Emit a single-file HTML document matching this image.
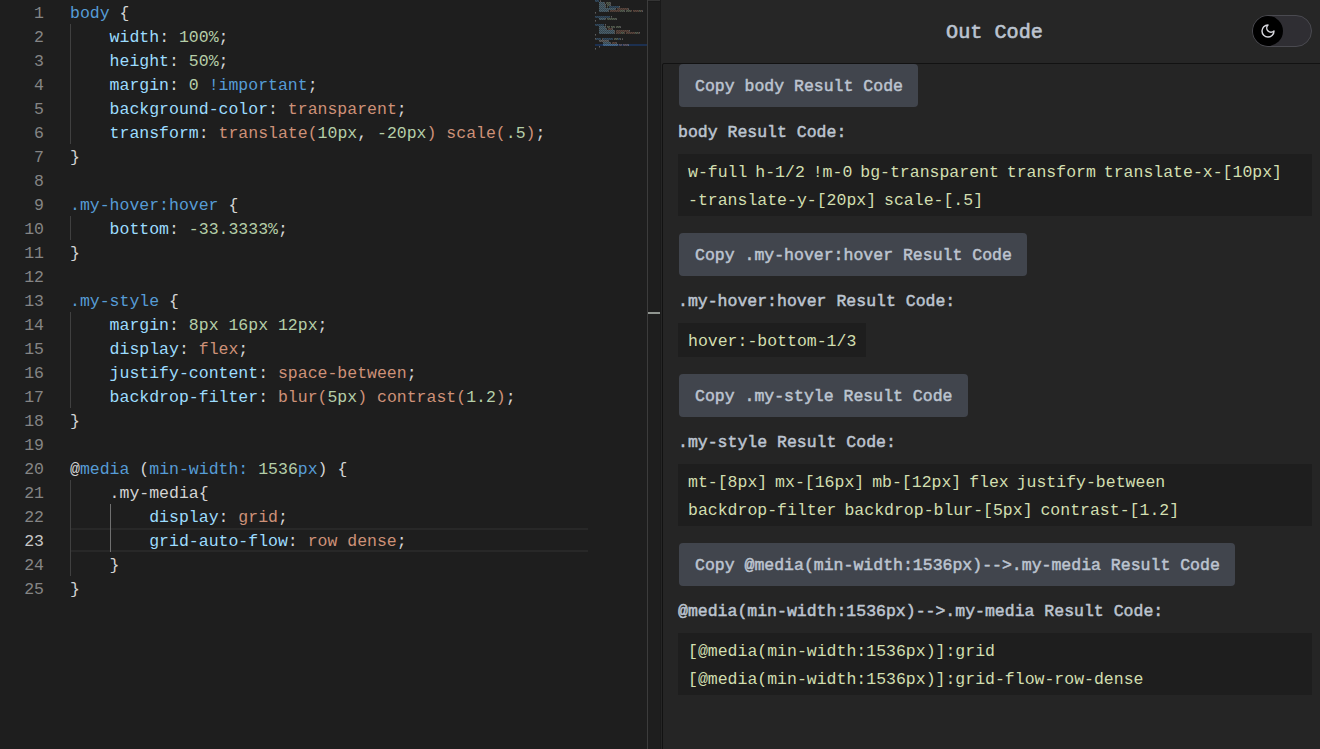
<!DOCTYPE html>
<html><head><meta charset="utf-8"><style>
html,body{margin:0;padding:0;width:1320px;height:749px;overflow:hidden;background:#1e1e1e;}
*{box-sizing:border-box;}
.ed{position:absolute;left:0;top:0;width:660px;height:749px;background:#1e1e1e;overflow:hidden;font-family:"Liberation Mono",monospace;font-size:16.5px;}
.ln{position:absolute;left:0;width:44px;text-align:right;color:#858585;line-height:24px;height:24px;padding-top:2px;}
.ln.act{color:#c6c6c6;}
.cl{position:absolute;left:70px;line-height:24px;height:24px;white-space:pre;padding-top:2px;}
.cur{position:absolute;left:70px;width:518px;height:24px;border-top:2px solid #282828;border-bottom:2px solid #282828;}
.ig{position:absolute;width:1px;background:#404040;}
.ig.ia{background:#707070;}
.mm{position:absolute;left:595px;top:0;}
.orb{position:absolute;left:647px;top:0;width:1px;height:749px;background:#3c3c3c;}
.curmark{position:absolute;left:648px;top:312px;width:13px;height:2px;background:#909590;}
.div{position:absolute;left:660px;top:0;width:1px;height:749px;background:#1a1a1a;}
.rp{position:absolute;left:661px;top:0;width:659px;height:749px;background:#262626;font-family:"Liberation Mono",monospace;}
.hdr{position:absolute;left:4px;top:1px;width:659px;height:63px;text-align:center;line-height:63px;font-weight:normal;-webkit-text-stroke:0.6px #bcc4d0;font-size:20.2px;color:#bcc4d0;}
.tog{position:absolute;left:591px;top:15px;width:60px;height:32px;border-radius:16px;border:1px solid #4a4a50;background:#2f2e33;}
.knob{position:absolute;left:0px;top:0px;width:30px;height:30px;border-radius:15px;background:#000;display:flex;align-items:center;justify-content:center;}
.box{position:absolute;left:1px;top:63px;width:700px;height:800px;border:1px solid #121212;border-radius:2px;background:#252525;}
.btn{position:absolute;left:18px;height:43px;line-height:45px;padding:0 16px;background:#41454d;color:#bcc4d0;font-weight:normal;-webkit-text-stroke:0.5px #bcc4d0;font-size:16.5px;border-radius:4px;white-space:pre;}
.lbl{position:absolute;left:17px;height:28px;line-height:28px;font-weight:normal;-webkit-text-stroke:0.5px #bcc4d0;font-size:16.5px;color:#bcc4d0;white-space:pre;}
.blk{position:absolute;left:17px;background:#1e1e1e;padding:3px 10px;font-size:16.5px;color:#d2dfb0;word-spacing:-2px;}
.bl{height:28px;line-height:28px;white-space:pre;padding-top:2px;}
</style></head><body>
<div class="ed">
<div class="ln" style="top:0px">1</div>
<div class="ln" style="top:24px">2</div>
<div class="ln" style="top:48px">3</div>
<div class="ln" style="top:72px">4</div>
<div class="ln" style="top:96px">5</div>
<div class="ln" style="top:120px">6</div>
<div class="ln" style="top:144px">7</div>
<div class="ln" style="top:168px">8</div>
<div class="ln" style="top:192px">9</div>
<div class="ln" style="top:216px">10</div>
<div class="ln" style="top:240px">11</div>
<div class="ln" style="top:264px">12</div>
<div class="ln" style="top:288px">13</div>
<div class="ln" style="top:312px">14</div>
<div class="ln" style="top:336px">15</div>
<div class="ln" style="top:360px">16</div>
<div class="ln" style="top:384px">17</div>
<div class="ln" style="top:408px">18</div>
<div class="ln" style="top:432px">19</div>
<div class="ln" style="top:456px">20</div>
<div class="ln" style="top:480px">21</div>
<div class="ln" style="top:504px">22</div>
<div class="ln act" style="top:528px">23</div>
<div class="ln" style="top:552px">24</div>
<div class="ln" style="top:576px">25</div>
<div class="cur" style="top:528px"></div>
<div class="ig" style="left:70px;top:24px;height:120px"></div>
<div class="ig" style="left:70px;top:216px;height:24px"></div>
<div class="ig" style="left:70px;top:312px;height:96px"></div>
<div class="ig" style="left:70px;top:480px;height:96px"></div>
<div class="ig ia" style="left:110px;top:504px;height:48px"></div>
<div class="cl" style="top:0px"><span style="color:#569cd6">body</span> <span style="color:#d4d4d4">{</span></div>
<div class="cl" style="top:24px">    <span style="color:#9cdcfe">width</span><span style="color:#d4d4d4">: </span><span style="color:#b5cea8">100%</span><span style="color:#d4d4d4">;</span></div>
<div class="cl" style="top:48px">    <span style="color:#9cdcfe">height</span><span style="color:#d4d4d4">: </span><span style="color:#b5cea8">50%</span><span style="color:#d4d4d4">;</span></div>
<div class="cl" style="top:72px">    <span style="color:#9cdcfe">margin</span><span style="color:#d4d4d4">: </span><span style="color:#b5cea8">0</span> <span style="color:#569cd6">!important</span><span style="color:#d4d4d4">;</span></div>
<div class="cl" style="top:96px">    <span style="color:#9cdcfe">background-color</span><span style="color:#d4d4d4">: </span><span style="color:#ce9178">transparent</span><span style="color:#d4d4d4">;</span></div>
<div class="cl" style="top:120px">    <span style="color:#9cdcfe">transform</span><span style="color:#d4d4d4">: </span><span style="color:#ce9178">translate(</span><span style="color:#b5cea8">10px</span><span style="color:#d4d4d4">, </span><span style="color:#b5cea8">-20px</span><span style="color:#ce9178">)</span> <span style="color:#ce9178">scale(</span><span style="color:#b5cea8">.5</span><span style="color:#ce9178">)</span><span style="color:#d4d4d4">;</span></div>
<div class="cl" style="top:144px"><span style="color:#d4d4d4">}</span></div>
<div class="cl" style="top:168px"></div>
<div class="cl" style="top:192px"><span style="color:#569cd6">.my-hover:hover</span> <span style="color:#d4d4d4">{</span></div>
<div class="cl" style="top:216px">    <span style="color:#9cdcfe">bottom</span><span style="color:#d4d4d4">: </span><span style="color:#b5cea8">-33.3333%</span><span style="color:#d4d4d4">;</span></div>
<div class="cl" style="top:240px"><span style="color:#d4d4d4">}</span></div>
<div class="cl" style="top:264px"></div>
<div class="cl" style="top:288px"><span style="color:#569cd6">.my-style</span> <span style="color:#d4d4d4">{</span></div>
<div class="cl" style="top:312px">    <span style="color:#9cdcfe">margin</span><span style="color:#d4d4d4">: </span><span style="color:#b5cea8">8px 16px 12px</span><span style="color:#d4d4d4">;</span></div>
<div class="cl" style="top:336px">    <span style="color:#9cdcfe">display</span><span style="color:#d4d4d4">: </span><span style="color:#ce9178">flex</span><span style="color:#d4d4d4">;</span></div>
<div class="cl" style="top:360px">    <span style="color:#9cdcfe">justify-content</span><span style="color:#d4d4d4">: </span><span style="color:#ce9178">space-between</span><span style="color:#d4d4d4">;</span></div>
<div class="cl" style="top:384px">    <span style="color:#9cdcfe">backdrop-filter</span><span style="color:#d4d4d4">: </span><span style="color:#ce9178">blur(</span><span style="color:#b5cea8">5px</span><span style="color:#ce9178">)</span> <span style="color:#ce9178">contrast(</span><span style="color:#b5cea8">1.2</span><span style="color:#ce9178">)</span><span style="color:#d4d4d4">;</span></div>
<div class="cl" style="top:408px"><span style="color:#d4d4d4">}</span></div>
<div class="cl" style="top:432px"></div>
<div class="cl" style="top:456px"><span style="color:#d4d4d4">@</span><span style="color:#569cd6">media</span> <span style="color:#d4d4d4">(</span><span style="color:#569cd6">min-width:</span> <span style="color:#b5cea8">1536</span><span style="color:#569cd6">px</span><span style="color:#d4d4d4">)</span> <span style="color:#d4d4d4">{</span></div>
<div class="cl" style="top:480px">    <span style="color:#d4d4d4">.my-media{</span></div>
<div class="cl" style="top:504px">        <span style="color:#9cdcfe">display</span><span style="color:#d4d4d4">: </span><span style="color:#ce9178">grid</span><span style="color:#d4d4d4">;</span></div>
<div class="cl" style="top:528px">        <span style="color:#9cdcfe">grid-auto-flow</span><span style="color:#d4d4d4">: </span><span style="color:#ce9178">row dense</span><span style="color:#d4d4d4">;</span></div>
<div class="cl" style="top:552px">    <span style="color:#d4d4d4">}</span></div>
<div class="cl" style="top:576px"><span style="color:#d4d4d4">}</span></div>
<svg class="mm" width="60" height="60" viewBox="0 0 60 60"><rect x="0" y="44" width="52" height="2" fill="#1c3050"/><g opacity="0.8"><rect x="0" y="0" width="1" height="1" fill="#569cd6" opacity="0.45"/><rect x="0" y="1" width="1" height="1" fill="#569cd6" opacity="0.25"/><rect x="1" y="0" width="1" height="1" fill="#569cd6" opacity="0.3"/><rect x="1" y="1" width="1" height="1" fill="#569cd6" opacity="0.4"/><rect x="2" y="0" width="1" height="1" fill="#569cd6" opacity="0.45"/><rect x="2" y="1" width="1" height="1" fill="#569cd6" opacity="0.25"/><rect x="3" y="0" width="1" height="1" fill="#569cd6" opacity="0.3"/><rect x="3" y="1" width="1" height="1" fill="#569cd6" opacity="0.4"/><rect x="5" y="0" width="1" height="1" fill="#d4d4d4" opacity="0.3"/><rect x="5" y="1" width="1" height="1" fill="#d4d4d4" opacity="0.4"/><rect x="4" y="2" width="1" height="1" fill="#9cdcfe" opacity="0.45"/><rect x="4" y="3" width="1" height="1" fill="#9cdcfe" opacity="0.25"/><rect x="5" y="2" width="1" height="1" fill="#9cdcfe" opacity="0.3"/><rect x="5" y="3" width="1" height="1" fill="#9cdcfe" opacity="0.4"/><rect x="6" y="2" width="1" height="1" fill="#9cdcfe" opacity="0.45"/><rect x="6" y="3" width="1" height="1" fill="#9cdcfe" opacity="0.25"/><rect x="7" y="2" width="1" height="1" fill="#9cdcfe" opacity="0.3"/><rect x="7" y="3" width="1" height="1" fill="#9cdcfe" opacity="0.4"/><rect x="8" y="2" width="1" height="1" fill="#9cdcfe" opacity="0.45"/><rect x="8" y="3" width="1" height="1" fill="#9cdcfe" opacity="0.25"/><rect x="9" y="2" width="1" height="1" fill="#d4d4d4" opacity="0.3"/><rect x="9" y="3" width="1" height="1" fill="#d4d4d4" opacity="0.4"/><rect x="11" y="2" width="1" height="1" fill="#b5cea8" opacity="0.3"/><rect x="11" y="3" width="1" height="1" fill="#b5cea8" opacity="0.4"/><rect x="12" y="2" width="1" height="1" fill="#b5cea8" opacity="0.45"/><rect x="12" y="3" width="1" height="1" fill="#b5cea8" opacity="0.25"/><rect x="13" y="2" width="1" height="1" fill="#b5cea8" opacity="0.3"/><rect x="13" y="3" width="1" height="1" fill="#b5cea8" opacity="0.4"/><rect x="14" y="2" width="1" height="1" fill="#b5cea8" opacity="0.45"/><rect x="14" y="3" width="1" height="1" fill="#b5cea8" opacity="0.25"/><rect x="15" y="2" width="1" height="1" fill="#d4d4d4" opacity="0.3"/><rect x="15" y="3" width="1" height="1" fill="#d4d4d4" opacity="0.4"/><rect x="4" y="4" width="1" height="1" fill="#9cdcfe" opacity="0.45"/><rect x="4" y="5" width="1" height="1" fill="#9cdcfe" opacity="0.25"/><rect x="5" y="4" width="1" height="1" fill="#9cdcfe" opacity="0.3"/><rect x="5" y="5" width="1" height="1" fill="#9cdcfe" opacity="0.4"/><rect x="6" y="4" width="1" height="1" fill="#9cdcfe" opacity="0.45"/><rect x="6" y="5" width="1" height="1" fill="#9cdcfe" opacity="0.25"/><rect x="7" y="4" width="1" height="1" fill="#9cdcfe" opacity="0.3"/><rect x="7" y="5" width="1" height="1" fill="#9cdcfe" opacity="0.4"/><rect x="8" y="4" width="1" height="1" fill="#9cdcfe" opacity="0.45"/><rect x="8" y="5" width="1" height="1" fill="#9cdcfe" opacity="0.25"/><rect x="9" y="4" width="1" height="1" fill="#9cdcfe" opacity="0.3"/><rect x="9" y="5" width="1" height="1" fill="#9cdcfe" opacity="0.4"/><rect x="10" y="4" width="1" height="1" fill="#d4d4d4" opacity="0.45"/><rect x="10" y="5" width="1" height="1" fill="#d4d4d4" opacity="0.25"/><rect x="12" y="4" width="1" height="1" fill="#b5cea8" opacity="0.45"/><rect x="12" y="5" width="1" height="1" fill="#b5cea8" opacity="0.25"/><rect x="13" y="4" width="1" height="1" fill="#b5cea8" opacity="0.3"/><rect x="13" y="5" width="1" height="1" fill="#b5cea8" opacity="0.4"/><rect x="14" y="4" width="1" height="1" fill="#b5cea8" opacity="0.45"/><rect x="14" y="5" width="1" height="1" fill="#b5cea8" opacity="0.25"/><rect x="15" y="4" width="1" height="1" fill="#d4d4d4" opacity="0.3"/><rect x="15" y="5" width="1" height="1" fill="#d4d4d4" opacity="0.4"/><rect x="4" y="6" width="1" height="1" fill="#9cdcfe" opacity="0.45"/><rect x="4" y="7" width="1" height="1" fill="#9cdcfe" opacity="0.25"/><rect x="5" y="6" width="1" height="1" fill="#9cdcfe" opacity="0.3"/><rect x="5" y="7" width="1" height="1" fill="#9cdcfe" opacity="0.4"/><rect x="6" y="6" width="1" height="1" fill="#9cdcfe" opacity="0.45"/><rect x="6" y="7" width="1" height="1" fill="#9cdcfe" opacity="0.25"/><rect x="7" y="6" width="1" height="1" fill="#9cdcfe" opacity="0.3"/><rect x="7" y="7" width="1" height="1" fill="#9cdcfe" opacity="0.4"/><rect x="8" y="6" width="1" height="1" fill="#9cdcfe" opacity="0.45"/><rect x="8" y="7" width="1" height="1" fill="#9cdcfe" opacity="0.25"/><rect x="9" y="6" width="1" height="1" fill="#9cdcfe" opacity="0.3"/><rect x="9" y="7" width="1" height="1" fill="#9cdcfe" opacity="0.4"/><rect x="10" y="6" width="1" height="1" fill="#d4d4d4" opacity="0.45"/><rect x="10" y="7" width="1" height="1" fill="#d4d4d4" opacity="0.25"/><rect x="12" y="6" width="1" height="1" fill="#b5cea8" opacity="0.45"/><rect x="12" y="7" width="1" height="1" fill="#b5cea8" opacity="0.25"/><rect x="14" y="6" width="1" height="1" fill="#569cd6" opacity="0.45"/><rect x="14" y="7" width="1" height="1" fill="#569cd6" opacity="0.25"/><rect x="15" y="6" width="1" height="1" fill="#569cd6" opacity="0.3"/><rect x="15" y="7" width="1" height="1" fill="#569cd6" opacity="0.4"/><rect x="16" y="6" width="1" height="1" fill="#569cd6" opacity="0.45"/><rect x="16" y="7" width="1" height="1" fill="#569cd6" opacity="0.25"/><rect x="17" y="6" width="1" height="1" fill="#569cd6" opacity="0.3"/><rect x="17" y="7" width="1" height="1" fill="#569cd6" opacity="0.4"/><rect x="18" y="6" width="1" height="1" fill="#569cd6" opacity="0.45"/><rect x="18" y="7" width="1" height="1" fill="#569cd6" opacity="0.25"/><rect x="19" y="6" width="1" height="1" fill="#569cd6" opacity="0.3"/><rect x="19" y="7" width="1" height="1" fill="#569cd6" opacity="0.4"/><rect x="20" y="6" width="1" height="1" fill="#569cd6" opacity="0.45"/><rect x="20" y="7" width="1" height="1" fill="#569cd6" opacity="0.25"/><rect x="21" y="6" width="1" height="1" fill="#569cd6" opacity="0.3"/><rect x="21" y="7" width="1" height="1" fill="#569cd6" opacity="0.4"/><rect x="22" y="6" width="1" height="1" fill="#569cd6" opacity="0.45"/><rect x="22" y="7" width="1" height="1" fill="#569cd6" opacity="0.25"/><rect x="23" y="6" width="1" height="1" fill="#569cd6" opacity="0.3"/><rect x="23" y="7" width="1" height="1" fill="#569cd6" opacity="0.4"/><rect x="24" y="6" width="1" height="1" fill="#d4d4d4" opacity="0.45"/><rect x="24" y="7" width="1" height="1" fill="#d4d4d4" opacity="0.25"/><rect x="4" y="8" width="1" height="1" fill="#9cdcfe" opacity="0.45"/><rect x="4" y="9" width="1" height="1" fill="#9cdcfe" opacity="0.25"/><rect x="5" y="8" width="1" height="1" fill="#9cdcfe" opacity="0.3"/><rect x="5" y="9" width="1" height="1" fill="#9cdcfe" opacity="0.4"/><rect x="6" y="8" width="1" height="1" fill="#9cdcfe" opacity="0.45"/><rect x="6" y="9" width="1" height="1" fill="#9cdcfe" opacity="0.25"/><rect x="7" y="8" width="1" height="1" fill="#9cdcfe" opacity="0.3"/><rect x="7" y="9" width="1" height="1" fill="#9cdcfe" opacity="0.4"/><rect x="8" y="8" width="1" height="1" fill="#9cdcfe" opacity="0.45"/><rect x="8" y="9" width="1" height="1" fill="#9cdcfe" opacity="0.25"/><rect x="9" y="8" width="1" height="1" fill="#9cdcfe" opacity="0.3"/><rect x="9" y="9" width="1" height="1" fill="#9cdcfe" opacity="0.4"/><rect x="10" y="8" width="1" height="1" fill="#9cdcfe" opacity="0.45"/><rect x="10" y="9" width="1" height="1" fill="#9cdcfe" opacity="0.25"/><rect x="11" y="8" width="1" height="1" fill="#9cdcfe" opacity="0.3"/><rect x="11" y="9" width="1" height="1" fill="#9cdcfe" opacity="0.4"/><rect x="12" y="8" width="1" height="1" fill="#9cdcfe" opacity="0.45"/><rect x="12" y="9" width="1" height="1" fill="#9cdcfe" opacity="0.25"/><rect x="13" y="8" width="1" height="1" fill="#9cdcfe" opacity="0.3"/><rect x="13" y="9" width="1" height="1" fill="#9cdcfe" opacity="0.4"/><rect x="14" y="8" width="1" height="1" fill="#9cdcfe" opacity="0.45"/><rect x="14" y="9" width="1" height="1" fill="#9cdcfe" opacity="0.25"/><rect x="15" y="8" width="1" height="1" fill="#9cdcfe" opacity="0.3"/><rect x="15" y="9" width="1" height="1" fill="#9cdcfe" opacity="0.4"/><rect x="16" y="8" width="1" height="1" fill="#9cdcfe" opacity="0.45"/><rect x="16" y="9" width="1" height="1" fill="#9cdcfe" opacity="0.25"/><rect x="17" y="8" width="1" height="1" fill="#9cdcfe" opacity="0.3"/><rect x="17" y="9" width="1" height="1" fill="#9cdcfe" opacity="0.4"/><rect x="18" y="8" width="1" height="1" fill="#9cdcfe" opacity="0.45"/><rect x="18" y="9" width="1" height="1" fill="#9cdcfe" opacity="0.25"/><rect x="19" y="8" width="1" height="1" fill="#9cdcfe" opacity="0.3"/><rect x="19" y="9" width="1" height="1" fill="#9cdcfe" opacity="0.4"/><rect x="20" y="8" width="1" height="1" fill="#d4d4d4" opacity="0.45"/><rect x="20" y="9" width="1" height="1" fill="#d4d4d4" opacity="0.25"/><rect x="22" y="8" width="1" height="1" fill="#ce9178" opacity="0.45"/><rect x="22" y="9" width="1" height="1" fill="#ce9178" opacity="0.25"/><rect x="23" y="8" width="1" height="1" fill="#ce9178" opacity="0.3"/><rect x="23" y="9" width="1" height="1" fill="#ce9178" opacity="0.4"/><rect x="24" y="8" width="1" height="1" fill="#ce9178" opacity="0.45"/><rect x="24" y="9" width="1" height="1" fill="#ce9178" opacity="0.25"/><rect x="25" y="8" width="1" height="1" fill="#ce9178" opacity="0.3"/><rect x="25" y="9" width="1" height="1" fill="#ce9178" opacity="0.4"/><rect x="26" y="8" width="1" height="1" fill="#ce9178" opacity="0.45"/><rect x="26" y="9" width="1" height="1" fill="#ce9178" opacity="0.25"/><rect x="27" y="8" width="1" height="1" fill="#ce9178" opacity="0.3"/><rect x="27" y="9" width="1" height="1" fill="#ce9178" opacity="0.4"/><rect x="28" y="8" width="1" height="1" fill="#ce9178" opacity="0.45"/><rect x="28" y="9" width="1" height="1" fill="#ce9178" opacity="0.25"/><rect x="29" y="8" width="1" height="1" fill="#ce9178" opacity="0.3"/><rect x="29" y="9" width="1" height="1" fill="#ce9178" opacity="0.4"/><rect x="30" y="8" width="1" height="1" fill="#ce9178" opacity="0.45"/><rect x="30" y="9" width="1" height="1" fill="#ce9178" opacity="0.25"/><rect x="31" y="8" width="1" height="1" fill="#ce9178" opacity="0.3"/><rect x="31" y="9" width="1" height="1" fill="#ce9178" opacity="0.4"/><rect x="32" y="8" width="1" height="1" fill="#ce9178" opacity="0.45"/><rect x="32" y="9" width="1" height="1" fill="#ce9178" opacity="0.25"/><rect x="33" y="8" width="1" height="1" fill="#d4d4d4" opacity="0.3"/><rect x="33" y="9" width="1" height="1" fill="#d4d4d4" opacity="0.4"/><rect x="4" y="10" width="1" height="1" fill="#9cdcfe" opacity="0.45"/><rect x="4" y="11" width="1" height="1" fill="#9cdcfe" opacity="0.25"/><rect x="5" y="10" width="1" height="1" fill="#9cdcfe" opacity="0.3"/><rect x="5" y="11" width="1" height="1" fill="#9cdcfe" opacity="0.4"/><rect x="6" y="10" width="1" height="1" fill="#9cdcfe" opacity="0.45"/><rect x="6" y="11" width="1" height="1" fill="#9cdcfe" opacity="0.25"/><rect x="7" y="10" width="1" height="1" fill="#9cdcfe" opacity="0.3"/><rect x="7" y="11" width="1" height="1" fill="#9cdcfe" opacity="0.4"/><rect x="8" y="10" width="1" height="1" fill="#9cdcfe" opacity="0.45"/><rect x="8" y="11" width="1" height="1" fill="#9cdcfe" opacity="0.25"/><rect x="9" y="10" width="1" height="1" fill="#9cdcfe" opacity="0.3"/><rect x="9" y="11" width="1" height="1" fill="#9cdcfe" opacity="0.4"/><rect x="10" y="10" width="1" height="1" fill="#9cdcfe" opacity="0.45"/><rect x="10" y="11" width="1" height="1" fill="#9cdcfe" opacity="0.25"/><rect x="11" y="10" width="1" height="1" fill="#9cdcfe" opacity="0.3"/><rect x="11" y="11" width="1" height="1" fill="#9cdcfe" opacity="0.4"/><rect x="12" y="10" width="1" height="1" fill="#9cdcfe" opacity="0.45"/><rect x="12" y="11" width="1" height="1" fill="#9cdcfe" opacity="0.25"/><rect x="13" y="10" width="1" height="1" fill="#d4d4d4" opacity="0.3"/><rect x="13" y="11" width="1" height="1" fill="#d4d4d4" opacity="0.4"/><rect x="15" y="10" width="1" height="1" fill="#ce9178" opacity="0.3"/><rect x="15" y="11" width="1" height="1" fill="#ce9178" opacity="0.4"/><rect x="16" y="10" width="1" height="1" fill="#ce9178" opacity="0.45"/><rect x="16" y="11" width="1" height="1" fill="#ce9178" opacity="0.25"/><rect x="17" y="10" width="1" height="1" fill="#ce9178" opacity="0.3"/><rect x="17" y="11" width="1" height="1" fill="#ce9178" opacity="0.4"/><rect x="18" y="10" width="1" height="1" fill="#ce9178" opacity="0.45"/><rect x="18" y="11" width="1" height="1" fill="#ce9178" opacity="0.25"/><rect x="19" y="10" width="1" height="1" fill="#ce9178" opacity="0.3"/><rect x="19" y="11" width="1" height="1" fill="#ce9178" opacity="0.4"/><rect x="20" y="10" width="1" height="1" fill="#ce9178" opacity="0.45"/><rect x="20" y="11" width="1" height="1" fill="#ce9178" opacity="0.25"/><rect x="21" y="10" width="1" height="1" fill="#ce9178" opacity="0.3"/><rect x="21" y="11" width="1" height="1" fill="#ce9178" opacity="0.4"/><rect x="22" y="10" width="1" height="1" fill="#ce9178" opacity="0.45"/><rect x="22" y="11" width="1" height="1" fill="#ce9178" opacity="0.25"/><rect x="23" y="10" width="1" height="1" fill="#ce9178" opacity="0.3"/><rect x="23" y="11" width="1" height="1" fill="#ce9178" opacity="0.4"/><rect x="24" y="10" width="1" height="1" fill="#ce9178" opacity="0.45"/><rect x="24" y="11" width="1" height="1" fill="#ce9178" opacity="0.25"/><rect x="25" y="10" width="1" height="1" fill="#b5cea8" opacity="0.3"/><rect x="25" y="11" width="1" height="1" fill="#b5cea8" opacity="0.4"/><rect x="26" y="10" width="1" height="1" fill="#b5cea8" opacity="0.45"/><rect x="26" y="11" width="1" height="1" fill="#b5cea8" opacity="0.25"/><rect x="27" y="10" width="1" height="1" fill="#b5cea8" opacity="0.3"/><rect x="27" y="11" width="1" height="1" fill="#b5cea8" opacity="0.4"/><rect x="28" y="10" width="1" height="1" fill="#b5cea8" opacity="0.45"/><rect x="28" y="11" width="1" height="1" fill="#b5cea8" opacity="0.25"/><rect x="29" y="10" width="1" height="1" fill="#d4d4d4" opacity="0.3"/><rect x="29" y="11" width="1" height="1" fill="#d4d4d4" opacity="0.4"/><rect x="31" y="10" width="1" height="1" fill="#b5cea8" opacity="0.3"/><rect x="31" y="11" width="1" height="1" fill="#b5cea8" opacity="0.4"/><rect x="32" y="10" width="1" height="1" fill="#b5cea8" opacity="0.45"/><rect x="32" y="11" width="1" height="1" fill="#b5cea8" opacity="0.25"/><rect x="33" y="10" width="1" height="1" fill="#b5cea8" opacity="0.3"/><rect x="33" y="11" width="1" height="1" fill="#b5cea8" opacity="0.4"/><rect x="34" y="10" width="1" height="1" fill="#b5cea8" opacity="0.45"/><rect x="34" y="11" width="1" height="1" fill="#b5cea8" opacity="0.25"/><rect x="35" y="10" width="1" height="1" fill="#b5cea8" opacity="0.3"/><rect x="35" y="11" width="1" height="1" fill="#b5cea8" opacity="0.4"/><rect x="36" y="10" width="1" height="1" fill="#ce9178" opacity="0.45"/><rect x="36" y="11" width="1" height="1" fill="#ce9178" opacity="0.25"/><rect x="38" y="10" width="1" height="1" fill="#ce9178" opacity="0.45"/><rect x="38" y="11" width="1" height="1" fill="#ce9178" opacity="0.25"/><rect x="39" y="10" width="1" height="1" fill="#ce9178" opacity="0.3"/><rect x="39" y="11" width="1" height="1" fill="#ce9178" opacity="0.4"/><rect x="40" y="10" width="1" height="1" fill="#ce9178" opacity="0.45"/><rect x="40" y="11" width="1" height="1" fill="#ce9178" opacity="0.25"/><rect x="41" y="10" width="1" height="1" fill="#ce9178" opacity="0.3"/><rect x="41" y="11" width="1" height="1" fill="#ce9178" opacity="0.4"/><rect x="42" y="10" width="1" height="1" fill="#ce9178" opacity="0.45"/><rect x="42" y="11" width="1" height="1" fill="#ce9178" opacity="0.25"/><rect x="43" y="10" width="1" height="1" fill="#ce9178" opacity="0.3"/><rect x="43" y="11" width="1" height="1" fill="#ce9178" opacity="0.4"/><rect x="44" y="10" width="1" height="1" fill="#b5cea8" opacity="0.45"/><rect x="44" y="11" width="1" height="1" fill="#b5cea8" opacity="0.25"/><rect x="45" y="10" width="1" height="1" fill="#b5cea8" opacity="0.3"/><rect x="45" y="11" width="1" height="1" fill="#b5cea8" opacity="0.4"/><rect x="46" y="10" width="1" height="1" fill="#ce9178" opacity="0.45"/><rect x="46" y="11" width="1" height="1" fill="#ce9178" opacity="0.25"/><rect x="47" y="10" width="1" height="1" fill="#d4d4d4" opacity="0.3"/><rect x="47" y="11" width="1" height="1" fill="#d4d4d4" opacity="0.4"/><rect x="0" y="12" width="1" height="1" fill="#d4d4d4" opacity="0.45"/><rect x="0" y="13" width="1" height="1" fill="#d4d4d4" opacity="0.25"/><rect x="0" y="16" width="1" height="1" fill="#569cd6" opacity="0.45"/><rect x="0" y="17" width="1" height="1" fill="#569cd6" opacity="0.25"/><rect x="1" y="16" width="1" height="1" fill="#569cd6" opacity="0.3"/><rect x="1" y="17" width="1" height="1" fill="#569cd6" opacity="0.4"/><rect x="2" y="16" width="1" height="1" fill="#569cd6" opacity="0.45"/><rect x="2" y="17" width="1" height="1" fill="#569cd6" opacity="0.25"/><rect x="3" y="16" width="1" height="1" fill="#569cd6" opacity="0.3"/><rect x="3" y="17" width="1" height="1" fill="#569cd6" opacity="0.4"/><rect x="4" y="16" width="1" height="1" fill="#569cd6" opacity="0.45"/><rect x="4" y="17" width="1" height="1" fill="#569cd6" opacity="0.25"/><rect x="5" y="16" width="1" height="1" fill="#569cd6" opacity="0.3"/><rect x="5" y="17" width="1" height="1" fill="#569cd6" opacity="0.4"/><rect x="6" y="16" width="1" height="1" fill="#569cd6" opacity="0.45"/><rect x="6" y="17" width="1" height="1" fill="#569cd6" opacity="0.25"/><rect x="7" y="16" width="1" height="1" fill="#569cd6" opacity="0.3"/><rect x="7" y="17" width="1" height="1" fill="#569cd6" opacity="0.4"/><rect x="8" y="16" width="1" height="1" fill="#569cd6" opacity="0.45"/><rect x="8" y="17" width="1" height="1" fill="#569cd6" opacity="0.25"/><rect x="9" y="16" width="1" height="1" fill="#569cd6" opacity="0.3"/><rect x="9" y="17" width="1" height="1" fill="#569cd6" opacity="0.4"/><rect x="10" y="16" width="1" height="1" fill="#569cd6" opacity="0.45"/><rect x="10" y="17" width="1" height="1" fill="#569cd6" opacity="0.25"/><rect x="11" y="16" width="1" height="1" fill="#569cd6" opacity="0.3"/><rect x="11" y="17" width="1" height="1" fill="#569cd6" opacity="0.4"/><rect x="12" y="16" width="1" height="1" fill="#569cd6" opacity="0.45"/><rect x="12" y="17" width="1" height="1" fill="#569cd6" opacity="0.25"/><rect x="13" y="16" width="1" height="1" fill="#569cd6" opacity="0.3"/><rect x="13" y="17" width="1" height="1" fill="#569cd6" opacity="0.4"/><rect x="14" y="16" width="1" height="1" fill="#569cd6" opacity="0.45"/><rect x="14" y="17" width="1" height="1" fill="#569cd6" opacity="0.25"/><rect x="16" y="16" width="1" height="1" fill="#d4d4d4" opacity="0.45"/><rect x="16" y="17" width="1" height="1" fill="#d4d4d4" opacity="0.25"/><rect x="4" y="18" width="1" height="1" fill="#9cdcfe" opacity="0.45"/><rect x="4" y="19" width="1" height="1" fill="#9cdcfe" opacity="0.25"/><rect x="5" y="18" width="1" height="1" fill="#9cdcfe" opacity="0.3"/><rect x="5" y="19" width="1" height="1" fill="#9cdcfe" opacity="0.4"/><rect x="6" y="18" width="1" height="1" fill="#9cdcfe" opacity="0.45"/><rect x="6" y="19" width="1" height="1" fill="#9cdcfe" opacity="0.25"/><rect x="7" y="18" width="1" height="1" fill="#9cdcfe" opacity="0.3"/><rect x="7" y="19" width="1" height="1" fill="#9cdcfe" opacity="0.4"/><rect x="8" y="18" width="1" height="1" fill="#9cdcfe" opacity="0.45"/><rect x="8" y="19" width="1" height="1" fill="#9cdcfe" opacity="0.25"/><rect x="9" y="18" width="1" height="1" fill="#9cdcfe" opacity="0.3"/><rect x="9" y="19" width="1" height="1" fill="#9cdcfe" opacity="0.4"/><rect x="10" y="18" width="1" height="1" fill="#d4d4d4" opacity="0.45"/><rect x="10" y="19" width="1" height="1" fill="#d4d4d4" opacity="0.25"/><rect x="12" y="18" width="1" height="1" fill="#b5cea8" opacity="0.45"/><rect x="12" y="19" width="1" height="1" fill="#b5cea8" opacity="0.25"/><rect x="13" y="18" width="1" height="1" fill="#b5cea8" opacity="0.3"/><rect x="13" y="19" width="1" height="1" fill="#b5cea8" opacity="0.4"/><rect x="14" y="18" width="1" height="1" fill="#b5cea8" opacity="0.45"/><rect x="14" y="19" width="1" height="1" fill="#b5cea8" opacity="0.25"/><rect x="15" y="18" width="1" height="1" fill="#b5cea8" opacity="0.3"/><rect x="15" y="19" width="1" height="1" fill="#b5cea8" opacity="0.4"/><rect x="16" y="18" width="1" height="1" fill="#b5cea8" opacity="0.45"/><rect x="16" y="19" width="1" height="1" fill="#b5cea8" opacity="0.25"/><rect x="17" y="18" width="1" height="1" fill="#b5cea8" opacity="0.3"/><rect x="17" y="19" width="1" height="1" fill="#b5cea8" opacity="0.4"/><rect x="18" y="18" width="1" height="1" fill="#b5cea8" opacity="0.45"/><rect x="18" y="19" width="1" height="1" fill="#b5cea8" opacity="0.25"/><rect x="19" y="18" width="1" height="1" fill="#b5cea8" opacity="0.3"/><rect x="19" y="19" width="1" height="1" fill="#b5cea8" opacity="0.4"/><rect x="20" y="18" width="1" height="1" fill="#b5cea8" opacity="0.45"/><rect x="20" y="19" width="1" height="1" fill="#b5cea8" opacity="0.25"/><rect x="21" y="18" width="1" height="1" fill="#d4d4d4" opacity="0.3"/><rect x="21" y="19" width="1" height="1" fill="#d4d4d4" opacity="0.4"/><rect x="0" y="20" width="1" height="1" fill="#d4d4d4" opacity="0.45"/><rect x="0" y="21" width="1" height="1" fill="#d4d4d4" opacity="0.25"/><rect x="0" y="24" width="1" height="1" fill="#569cd6" opacity="0.45"/><rect x="0" y="25" width="1" height="1" fill="#569cd6" opacity="0.25"/><rect x="1" y="24" width="1" height="1" fill="#569cd6" opacity="0.3"/><rect x="1" y="25" width="1" height="1" fill="#569cd6" opacity="0.4"/><rect x="2" y="24" width="1" height="1" fill="#569cd6" opacity="0.45"/><rect x="2" y="25" width="1" height="1" fill="#569cd6" opacity="0.25"/><rect x="3" y="24" width="1" height="1" fill="#569cd6" opacity="0.3"/><rect x="3" y="25" width="1" height="1" fill="#569cd6" opacity="0.4"/><rect x="4" y="24" width="1" height="1" fill="#569cd6" opacity="0.45"/><rect x="4" y="25" width="1" height="1" fill="#569cd6" opacity="0.25"/><rect x="5" y="24" width="1" height="1" fill="#569cd6" opacity="0.3"/><rect x="5" y="25" width="1" height="1" fill="#569cd6" opacity="0.4"/><rect x="6" y="24" width="1" height="1" fill="#569cd6" opacity="0.45"/><rect x="6" y="25" width="1" height="1" fill="#569cd6" opacity="0.25"/><rect x="7" y="24" width="1" height="1" fill="#569cd6" opacity="0.3"/><rect x="7" y="25" width="1" height="1" fill="#569cd6" opacity="0.4"/><rect x="8" y="24" width="1" height="1" fill="#569cd6" opacity="0.45"/><rect x="8" y="25" width="1" height="1" fill="#569cd6" opacity="0.25"/><rect x="10" y="24" width="1" height="1" fill="#d4d4d4" opacity="0.45"/><rect x="10" y="25" width="1" height="1" fill="#d4d4d4" opacity="0.25"/><rect x="4" y="26" width="1" height="1" fill="#9cdcfe" opacity="0.45"/><rect x="4" y="27" width="1" height="1" fill="#9cdcfe" opacity="0.25"/><rect x="5" y="26" width="1" height="1" fill="#9cdcfe" opacity="0.3"/><rect x="5" y="27" width="1" height="1" fill="#9cdcfe" opacity="0.4"/><rect x="6" y="26" width="1" height="1" fill="#9cdcfe" opacity="0.45"/><rect x="6" y="27" width="1" height="1" fill="#9cdcfe" opacity="0.25"/><rect x="7" y="26" width="1" height="1" fill="#9cdcfe" opacity="0.3"/><rect x="7" y="27" width="1" height="1" fill="#9cdcfe" opacity="0.4"/><rect x="8" y="26" width="1" height="1" fill="#9cdcfe" opacity="0.45"/><rect x="8" y="27" width="1" height="1" fill="#9cdcfe" opacity="0.25"/><rect x="9" y="26" width="1" height="1" fill="#9cdcfe" opacity="0.3"/><rect x="9" y="27" width="1" height="1" fill="#9cdcfe" opacity="0.4"/><rect x="10" y="26" width="1" height="1" fill="#d4d4d4" opacity="0.45"/><rect x="10" y="27" width="1" height="1" fill="#d4d4d4" opacity="0.25"/><rect x="12" y="26" width="1" height="1" fill="#b5cea8" opacity="0.45"/><rect x="12" y="27" width="1" height="1" fill="#b5cea8" opacity="0.25"/><rect x="13" y="26" width="1" height="1" fill="#b5cea8" opacity="0.3"/><rect x="13" y="27" width="1" height="1" fill="#b5cea8" opacity="0.4"/><rect x="14" y="26" width="1" height="1" fill="#b5cea8" opacity="0.45"/><rect x="14" y="27" width="1" height="1" fill="#b5cea8" opacity="0.25"/><rect x="16" y="26" width="1" height="1" fill="#b5cea8" opacity="0.45"/><rect x="16" y="27" width="1" height="1" fill="#b5cea8" opacity="0.25"/><rect x="17" y="26" width="1" height="1" fill="#b5cea8" opacity="0.3"/><rect x="17" y="27" width="1" height="1" fill="#b5cea8" opacity="0.4"/><rect x="18" y="26" width="1" height="1" fill="#b5cea8" opacity="0.45"/><rect x="18" y="27" width="1" height="1" fill="#b5cea8" opacity="0.25"/><rect x="19" y="26" width="1" height="1" fill="#b5cea8" opacity="0.3"/><rect x="19" y="27" width="1" height="1" fill="#b5cea8" opacity="0.4"/><rect x="21" y="26" width="1" height="1" fill="#b5cea8" opacity="0.3"/><rect x="21" y="27" width="1" height="1" fill="#b5cea8" opacity="0.4"/><rect x="22" y="26" width="1" height="1" fill="#b5cea8" opacity="0.45"/><rect x="22" y="27" width="1" height="1" fill="#b5cea8" opacity="0.25"/><rect x="23" y="26" width="1" height="1" fill="#b5cea8" opacity="0.3"/><rect x="23" y="27" width="1" height="1" fill="#b5cea8" opacity="0.4"/><rect x="24" y="26" width="1" height="1" fill="#b5cea8" opacity="0.45"/><rect x="24" y="27" width="1" height="1" fill="#b5cea8" opacity="0.25"/><rect x="25" y="26" width="1" height="1" fill="#d4d4d4" opacity="0.3"/><rect x="25" y="27" width="1" height="1" fill="#d4d4d4" opacity="0.4"/><rect x="4" y="28" width="1" height="1" fill="#9cdcfe" opacity="0.45"/><rect x="4" y="29" width="1" height="1" fill="#9cdcfe" opacity="0.25"/><rect x="5" y="28" width="1" height="1" fill="#9cdcfe" opacity="0.3"/><rect x="5" y="29" width="1" height="1" fill="#9cdcfe" opacity="0.4"/><rect x="6" y="28" width="1" height="1" fill="#9cdcfe" opacity="0.45"/><rect x="6" y="29" width="1" height="1" fill="#9cdcfe" opacity="0.25"/><rect x="7" y="28" width="1" height="1" fill="#9cdcfe" opacity="0.3"/><rect x="7" y="29" width="1" height="1" fill="#9cdcfe" opacity="0.4"/><rect x="8" y="28" width="1" height="1" fill="#9cdcfe" opacity="0.45"/><rect x="8" y="29" width="1" height="1" fill="#9cdcfe" opacity="0.25"/><rect x="9" y="28" width="1" height="1" fill="#9cdcfe" opacity="0.3"/><rect x="9" y="29" width="1" height="1" fill="#9cdcfe" opacity="0.4"/><rect x="10" y="28" width="1" height="1" fill="#9cdcfe" opacity="0.45"/><rect x="10" y="29" width="1" height="1" fill="#9cdcfe" opacity="0.25"/><rect x="11" y="28" width="1" height="1" fill="#d4d4d4" opacity="0.3"/><rect x="11" y="29" width="1" height="1" fill="#d4d4d4" opacity="0.4"/><rect x="13" y="28" width="1" height="1" fill="#ce9178" opacity="0.3"/><rect x="13" y="29" width="1" height="1" fill="#ce9178" opacity="0.4"/><rect x="14" y="28" width="1" height="1" fill="#ce9178" opacity="0.45"/><rect x="14" y="29" width="1" height="1" fill="#ce9178" opacity="0.25"/><rect x="15" y="28" width="1" height="1" fill="#ce9178" opacity="0.3"/><rect x="15" y="29" width="1" height="1" fill="#ce9178" opacity="0.4"/><rect x="16" y="28" width="1" height="1" fill="#ce9178" opacity="0.45"/><rect x="16" y="29" width="1" height="1" fill="#ce9178" opacity="0.25"/><rect x="17" y="28" width="1" height="1" fill="#d4d4d4" opacity="0.3"/><rect x="17" y="29" width="1" height="1" fill="#d4d4d4" opacity="0.4"/><rect x="4" y="30" width="1" height="1" fill="#9cdcfe" opacity="0.45"/><rect x="4" y="31" width="1" height="1" fill="#9cdcfe" opacity="0.25"/><rect x="5" y="30" width="1" height="1" fill="#9cdcfe" opacity="0.3"/><rect x="5" y="31" width="1" height="1" fill="#9cdcfe" opacity="0.4"/><rect x="6" y="30" width="1" height="1" fill="#9cdcfe" opacity="0.45"/><rect x="6" y="31" width="1" height="1" fill="#9cdcfe" opacity="0.25"/><rect x="7" y="30" width="1" height="1" fill="#9cdcfe" opacity="0.3"/><rect x="7" y="31" width="1" height="1" fill="#9cdcfe" opacity="0.4"/><rect x="8" y="30" width="1" height="1" fill="#9cdcfe" opacity="0.45"/><rect x="8" y="31" width="1" height="1" fill="#9cdcfe" opacity="0.25"/><rect x="9" y="30" width="1" height="1" fill="#9cdcfe" opacity="0.3"/><rect x="9" y="31" width="1" height="1" fill="#9cdcfe" opacity="0.4"/><rect x="10" y="30" width="1" height="1" fill="#9cdcfe" opacity="0.45"/><rect x="10" y="31" width="1" height="1" fill="#9cdcfe" opacity="0.25"/><rect x="11" y="30" width="1" height="1" fill="#9cdcfe" opacity="0.3"/><rect x="11" y="31" width="1" height="1" fill="#9cdcfe" opacity="0.4"/><rect x="12" y="30" width="1" height="1" fill="#9cdcfe" opacity="0.45"/><rect x="12" y="31" width="1" height="1" fill="#9cdcfe" opacity="0.25"/><rect x="13" y="30" width="1" height="1" fill="#9cdcfe" opacity="0.3"/><rect x="13" y="31" width="1" height="1" fill="#9cdcfe" opacity="0.4"/><rect x="14" y="30" width="1" height="1" fill="#9cdcfe" opacity="0.45"/><rect x="14" y="31" width="1" height="1" fill="#9cdcfe" opacity="0.25"/><rect x="15" y="30" width="1" height="1" fill="#9cdcfe" opacity="0.3"/><rect x="15" y="31" width="1" height="1" fill="#9cdcfe" opacity="0.4"/><rect x="16" y="30" width="1" height="1" fill="#9cdcfe" opacity="0.45"/><rect x="16" y="31" width="1" height="1" fill="#9cdcfe" opacity="0.25"/><rect x="17" y="30" width="1" height="1" fill="#9cdcfe" opacity="0.3"/><rect x="17" y="31" width="1" height="1" fill="#9cdcfe" opacity="0.4"/><rect x="18" y="30" width="1" height="1" fill="#9cdcfe" opacity="0.45"/><rect x="18" y="31" width="1" height="1" fill="#9cdcfe" opacity="0.25"/><rect x="19" y="30" width="1" height="1" fill="#d4d4d4" opacity="0.3"/><rect x="19" y="31" width="1" height="1" fill="#d4d4d4" opacity="0.4"/><rect x="21" y="30" width="1" height="1" fill="#ce9178" opacity="0.3"/><rect x="21" y="31" width="1" height="1" fill="#ce9178" opacity="0.4"/><rect x="22" y="30" width="1" height="1" fill="#ce9178" opacity="0.45"/><rect x="22" y="31" width="1" height="1" fill="#ce9178" opacity="0.25"/><rect x="23" y="30" width="1" height="1" fill="#ce9178" opacity="0.3"/><rect x="23" y="31" width="1" height="1" fill="#ce9178" opacity="0.4"/><rect x="24" y="30" width="1" height="1" fill="#ce9178" opacity="0.45"/><rect x="24" y="31" width="1" height="1" fill="#ce9178" opacity="0.25"/><rect x="25" y="30" width="1" height="1" fill="#ce9178" opacity="0.3"/><rect x="25" y="31" width="1" height="1" fill="#ce9178" opacity="0.4"/><rect x="26" y="30" width="1" height="1" fill="#ce9178" opacity="0.45"/><rect x="26" y="31" width="1" height="1" fill="#ce9178" opacity="0.25"/><rect x="27" y="30" width="1" height="1" fill="#ce9178" opacity="0.3"/><rect x="27" y="31" width="1" height="1" fill="#ce9178" opacity="0.4"/><rect x="28" y="30" width="1" height="1" fill="#ce9178" opacity="0.45"/><rect x="28" y="31" width="1" height="1" fill="#ce9178" opacity="0.25"/><rect x="29" y="30" width="1" height="1" fill="#ce9178" opacity="0.3"/><rect x="29" y="31" width="1" height="1" fill="#ce9178" opacity="0.4"/><rect x="30" y="30" width="1" height="1" fill="#ce9178" opacity="0.45"/><rect x="30" y="31" width="1" height="1" fill="#ce9178" opacity="0.25"/><rect x="31" y="30" width="1" height="1" fill="#ce9178" opacity="0.3"/><rect x="31" y="31" width="1" height="1" fill="#ce9178" opacity="0.4"/><rect x="32" y="30" width="1" height="1" fill="#ce9178" opacity="0.45"/><rect x="32" y="31" width="1" height="1" fill="#ce9178" opacity="0.25"/><rect x="33" y="30" width="1" height="1" fill="#ce9178" opacity="0.3"/><rect x="33" y="31" width="1" height="1" fill="#ce9178" opacity="0.4"/><rect x="34" y="30" width="1" height="1" fill="#d4d4d4" opacity="0.45"/><rect x="34" y="31" width="1" height="1" fill="#d4d4d4" opacity="0.25"/><rect x="4" y="32" width="1" height="1" fill="#9cdcfe" opacity="0.45"/><rect x="4" y="33" width="1" height="1" fill="#9cdcfe" opacity="0.25"/><rect x="5" y="32" width="1" height="1" fill="#9cdcfe" opacity="0.3"/><rect x="5" y="33" width="1" height="1" fill="#9cdcfe" opacity="0.4"/><rect x="6" y="32" width="1" height="1" fill="#9cdcfe" opacity="0.45"/><rect x="6" y="33" width="1" height="1" fill="#9cdcfe" opacity="0.25"/><rect x="7" y="32" width="1" height="1" fill="#9cdcfe" opacity="0.3"/><rect x="7" y="33" width="1" height="1" fill="#9cdcfe" opacity="0.4"/><rect x="8" y="32" width="1" height="1" fill="#9cdcfe" opacity="0.45"/><rect x="8" y="33" width="1" height="1" fill="#9cdcfe" opacity="0.25"/><rect x="9" y="32" width="1" height="1" fill="#9cdcfe" opacity="0.3"/><rect x="9" y="33" width="1" height="1" fill="#9cdcfe" opacity="0.4"/><rect x="10" y="32" width="1" height="1" fill="#9cdcfe" opacity="0.45"/><rect x="10" y="33" width="1" height="1" fill="#9cdcfe" opacity="0.25"/><rect x="11" y="32" width="1" height="1" fill="#9cdcfe" opacity="0.3"/><rect x="11" y="33" width="1" height="1" fill="#9cdcfe" opacity="0.4"/><rect x="12" y="32" width="1" height="1" fill="#9cdcfe" opacity="0.45"/><rect x="12" y="33" width="1" height="1" fill="#9cdcfe" opacity="0.25"/><rect x="13" y="32" width="1" height="1" fill="#9cdcfe" opacity="0.3"/><rect x="13" y="33" width="1" height="1" fill="#9cdcfe" opacity="0.4"/><rect x="14" y="32" width="1" height="1" fill="#9cdcfe" opacity="0.45"/><rect x="14" y="33" width="1" height="1" fill="#9cdcfe" opacity="0.25"/><rect x="15" y="32" width="1" height="1" fill="#9cdcfe" opacity="0.3"/><rect x="15" y="33" width="1" height="1" fill="#9cdcfe" opacity="0.4"/><rect x="16" y="32" width="1" height="1" fill="#9cdcfe" opacity="0.45"/><rect x="16" y="33" width="1" height="1" fill="#9cdcfe" opacity="0.25"/><rect x="17" y="32" width="1" height="1" fill="#9cdcfe" opacity="0.3"/><rect x="17" y="33" width="1" height="1" fill="#9cdcfe" opacity="0.4"/><rect x="18" y="32" width="1" height="1" fill="#9cdcfe" opacity="0.45"/><rect x="18" y="33" width="1" height="1" fill="#9cdcfe" opacity="0.25"/><rect x="19" y="32" width="1" height="1" fill="#d4d4d4" opacity="0.3"/><rect x="19" y="33" width="1" height="1" fill="#d4d4d4" opacity="0.4"/><rect x="21" y="32" width="1" height="1" fill="#ce9178" opacity="0.3"/><rect x="21" y="33" width="1" height="1" fill="#ce9178" opacity="0.4"/><rect x="22" y="32" width="1" height="1" fill="#ce9178" opacity="0.45"/><rect x="22" y="33" width="1" height="1" fill="#ce9178" opacity="0.25"/><rect x="23" y="32" width="1" height="1" fill="#ce9178" opacity="0.3"/><rect x="23" y="33" width="1" height="1" fill="#ce9178" opacity="0.4"/><rect x="24" y="32" width="1" height="1" fill="#ce9178" opacity="0.45"/><rect x="24" y="33" width="1" height="1" fill="#ce9178" opacity="0.25"/><rect x="25" y="32" width="1" height="1" fill="#ce9178" opacity="0.3"/><rect x="25" y="33" width="1" height="1" fill="#ce9178" opacity="0.4"/><rect x="26" y="32" width="1" height="1" fill="#b5cea8" opacity="0.45"/><rect x="26" y="33" width="1" height="1" fill="#b5cea8" opacity="0.25"/><rect x="27" y="32" width="1" height="1" fill="#b5cea8" opacity="0.3"/><rect x="27" y="33" width="1" height="1" fill="#b5cea8" opacity="0.4"/><rect x="28" y="32" width="1" height="1" fill="#b5cea8" opacity="0.45"/><rect x="28" y="33" width="1" height="1" fill="#b5cea8" opacity="0.25"/><rect x="29" y="32" width="1" height="1" fill="#ce9178" opacity="0.3"/><rect x="29" y="33" width="1" height="1" fill="#ce9178" opacity="0.4"/><rect x="31" y="32" width="1" height="1" fill="#ce9178" opacity="0.3"/><rect x="31" y="33" width="1" height="1" fill="#ce9178" opacity="0.4"/><rect x="32" y="32" width="1" height="1" fill="#ce9178" opacity="0.45"/><rect x="32" y="33" width="1" height="1" fill="#ce9178" opacity="0.25"/><rect x="33" y="32" width="1" height="1" fill="#ce9178" opacity="0.3"/><rect x="33" y="33" width="1" height="1" fill="#ce9178" opacity="0.4"/><rect x="34" y="32" width="1" height="1" fill="#ce9178" opacity="0.45"/><rect x="34" y="33" width="1" height="1" fill="#ce9178" opacity="0.25"/><rect x="35" y="32" width="1" height="1" fill="#ce9178" opacity="0.3"/><rect x="35" y="33" width="1" height="1" fill="#ce9178" opacity="0.4"/><rect x="36" y="32" width="1" height="1" fill="#ce9178" opacity="0.45"/><rect x="36" y="33" width="1" height="1" fill="#ce9178" opacity="0.25"/><rect x="37" y="32" width="1" height="1" fill="#ce9178" opacity="0.3"/><rect x="37" y="33" width="1" height="1" fill="#ce9178" opacity="0.4"/><rect x="38" y="32" width="1" height="1" fill="#ce9178" opacity="0.45"/><rect x="38" y="33" width="1" height="1" fill="#ce9178" opacity="0.25"/><rect x="39" y="32" width="1" height="1" fill="#ce9178" opacity="0.3"/><rect x="39" y="33" width="1" height="1" fill="#ce9178" opacity="0.4"/><rect x="40" y="32" width="1" height="1" fill="#b5cea8" opacity="0.45"/><rect x="40" y="33" width="1" height="1" fill="#b5cea8" opacity="0.25"/><rect x="41" y="32" width="1" height="1" fill="#b5cea8" opacity="0.3"/><rect x="41" y="33" width="1" height="1" fill="#b5cea8" opacity="0.4"/><rect x="42" y="32" width="1" height="1" fill="#b5cea8" opacity="0.45"/><rect x="42" y="33" width="1" height="1" fill="#b5cea8" opacity="0.25"/><rect x="43" y="32" width="1" height="1" fill="#ce9178" opacity="0.3"/><rect x="43" y="33" width="1" height="1" fill="#ce9178" opacity="0.4"/><rect x="44" y="32" width="1" height="1" fill="#d4d4d4" opacity="0.45"/><rect x="44" y="33" width="1" height="1" fill="#d4d4d4" opacity="0.25"/><rect x="0" y="34" width="1" height="1" fill="#d4d4d4" opacity="0.45"/><rect x="0" y="35" width="1" height="1" fill="#d4d4d4" opacity="0.25"/><rect x="0" y="38" width="1" height="1" fill="#d4d4d4" opacity="0.45"/><rect x="0" y="39" width="1" height="1" fill="#d4d4d4" opacity="0.25"/><rect x="1" y="38" width="1" height="1" fill="#569cd6" opacity="0.3"/><rect x="1" y="39" width="1" height="1" fill="#569cd6" opacity="0.4"/><rect x="2" y="38" width="1" height="1" fill="#569cd6" opacity="0.45"/><rect x="2" y="39" width="1" height="1" fill="#569cd6" opacity="0.25"/><rect x="3" y="38" width="1" height="1" fill="#569cd6" opacity="0.3"/><rect x="3" y="39" width="1" height="1" fill="#569cd6" opacity="0.4"/><rect x="4" y="38" width="1" height="1" fill="#569cd6" opacity="0.45"/><rect x="4" y="39" width="1" height="1" fill="#569cd6" opacity="0.25"/><rect x="5" y="38" width="1" height="1" fill="#569cd6" opacity="0.3"/><rect x="5" y="39" width="1" height="1" fill="#569cd6" opacity="0.4"/><rect x="7" y="38" width="1" height="1" fill="#d4d4d4" opacity="0.3"/><rect x="7" y="39" width="1" height="1" fill="#d4d4d4" opacity="0.4"/><rect x="8" y="38" width="1" height="1" fill="#569cd6" opacity="0.45"/><rect x="8" y="39" width="1" height="1" fill="#569cd6" opacity="0.25"/><rect x="9" y="38" width="1" height="1" fill="#569cd6" opacity="0.3"/><rect x="9" y="39" width="1" height="1" fill="#569cd6" opacity="0.4"/><rect x="10" y="38" width="1" height="1" fill="#569cd6" opacity="0.45"/><rect x="10" y="39" width="1" height="1" fill="#569cd6" opacity="0.25"/><rect x="11" y="38" width="1" height="1" fill="#569cd6" opacity="0.3"/><rect x="11" y="39" width="1" height="1" fill="#569cd6" opacity="0.4"/><rect x="12" y="38" width="1" height="1" fill="#569cd6" opacity="0.45"/><rect x="12" y="39" width="1" height="1" fill="#569cd6" opacity="0.25"/><rect x="13" y="38" width="1" height="1" fill="#569cd6" opacity="0.3"/><rect x="13" y="39" width="1" height="1" fill="#569cd6" opacity="0.4"/><rect x="14" y="38" width="1" height="1" fill="#569cd6" opacity="0.45"/><rect x="14" y="39" width="1" height="1" fill="#569cd6" opacity="0.25"/><rect x="15" y="38" width="1" height="1" fill="#569cd6" opacity="0.3"/><rect x="15" y="39" width="1" height="1" fill="#569cd6" opacity="0.4"/><rect x="16" y="38" width="1" height="1" fill="#569cd6" opacity="0.45"/><rect x="16" y="39" width="1" height="1" fill="#569cd6" opacity="0.25"/><rect x="17" y="38" width="1" height="1" fill="#569cd6" opacity="0.3"/><rect x="17" y="39" width="1" height="1" fill="#569cd6" opacity="0.4"/><rect x="19" y="38" width="1" height="1" fill="#b5cea8" opacity="0.3"/><rect x="19" y="39" width="1" height="1" fill="#b5cea8" opacity="0.4"/><rect x="20" y="38" width="1" height="1" fill="#b5cea8" opacity="0.45"/><rect x="20" y="39" width="1" height="1" fill="#b5cea8" opacity="0.25"/><rect x="21" y="38" width="1" height="1" fill="#b5cea8" opacity="0.3"/><rect x="21" y="39" width="1" height="1" fill="#b5cea8" opacity="0.4"/><rect x="22" y="38" width="1" height="1" fill="#b5cea8" opacity="0.45"/><rect x="22" y="39" width="1" height="1" fill="#b5cea8" opacity="0.25"/><rect x="23" y="38" width="1" height="1" fill="#569cd6" opacity="0.3"/><rect x="23" y="39" width="1" height="1" fill="#569cd6" opacity="0.4"/><rect x="24" y="38" width="1" height="1" fill="#569cd6" opacity="0.45"/><rect x="24" y="39" width="1" height="1" fill="#569cd6" opacity="0.25"/><rect x="25" y="38" width="1" height="1" fill="#d4d4d4" opacity="0.3"/><rect x="25" y="39" width="1" height="1" fill="#d4d4d4" opacity="0.4"/><rect x="27" y="38" width="1" height="1" fill="#d4d4d4" opacity="0.3"/><rect x="27" y="39" width="1" height="1" fill="#d4d4d4" opacity="0.4"/><rect x="4" y="40" width="1" height="1" fill="#d4d4d4" opacity="0.45"/><rect x="4" y="41" width="1" height="1" fill="#d4d4d4" opacity="0.25"/><rect x="5" y="40" width="1" height="1" fill="#d4d4d4" opacity="0.3"/><rect x="5" y="41" width="1" height="1" fill="#d4d4d4" opacity="0.4"/><rect x="6" y="40" width="1" height="1" fill="#d4d4d4" opacity="0.45"/><rect x="6" y="41" width="1" height="1" fill="#d4d4d4" opacity="0.25"/><rect x="7" y="40" width="1" height="1" fill="#d4d4d4" opacity="0.3"/><rect x="7" y="41" width="1" height="1" fill="#d4d4d4" opacity="0.4"/><rect x="8" y="40" width="1" height="1" fill="#d4d4d4" opacity="0.45"/><rect x="8" y="41" width="1" height="1" fill="#d4d4d4" opacity="0.25"/><rect x="9" y="40" width="1" height="1" fill="#d4d4d4" opacity="0.3"/><rect x="9" y="41" width="1" height="1" fill="#d4d4d4" opacity="0.4"/><rect x="10" y="40" width="1" height="1" fill="#d4d4d4" opacity="0.45"/><rect x="10" y="41" width="1" height="1" fill="#d4d4d4" opacity="0.25"/><rect x="11" y="40" width="1" height="1" fill="#d4d4d4" opacity="0.3"/><rect x="11" y="41" width="1" height="1" fill="#d4d4d4" opacity="0.4"/><rect x="12" y="40" width="1" height="1" fill="#d4d4d4" opacity="0.45"/><rect x="12" y="41" width="1" height="1" fill="#d4d4d4" opacity="0.25"/><rect x="13" y="40" width="1" height="1" fill="#d4d4d4" opacity="0.3"/><rect x="13" y="41" width="1" height="1" fill="#d4d4d4" opacity="0.4"/><rect x="8" y="42" width="1" height="1" fill="#9cdcfe" opacity="0.45"/><rect x="8" y="43" width="1" height="1" fill="#9cdcfe" opacity="0.25"/><rect x="9" y="42" width="1" height="1" fill="#9cdcfe" opacity="0.3"/><rect x="9" y="43" width="1" height="1" fill="#9cdcfe" opacity="0.4"/><rect x="10" y="42" width="1" height="1" fill="#9cdcfe" opacity="0.45"/><rect x="10" y="43" width="1" height="1" fill="#9cdcfe" opacity="0.25"/><rect x="11" y="42" width="1" height="1" fill="#9cdcfe" opacity="0.3"/><rect x="11" y="43" width="1" height="1" fill="#9cdcfe" opacity="0.4"/><rect x="12" y="42" width="1" height="1" fill="#9cdcfe" opacity="0.45"/><rect x="12" y="43" width="1" height="1" fill="#9cdcfe" opacity="0.25"/><rect x="13" y="42" width="1" height="1" fill="#9cdcfe" opacity="0.3"/><rect x="13" y="43" width="1" height="1" fill="#9cdcfe" opacity="0.4"/><rect x="14" y="42" width="1" height="1" fill="#9cdcfe" opacity="0.45"/><rect x="14" y="43" width="1" height="1" fill="#9cdcfe" opacity="0.25"/><rect x="15" y="42" width="1" height="1" fill="#d4d4d4" opacity="0.3"/><rect x="15" y="43" width="1" height="1" fill="#d4d4d4" opacity="0.4"/><rect x="17" y="42" width="1" height="1" fill="#ce9178" opacity="0.3"/><rect x="17" y="43" width="1" height="1" fill="#ce9178" opacity="0.4"/><rect x="18" y="42" width="1" height="1" fill="#ce9178" opacity="0.45"/><rect x="18" y="43" width="1" height="1" fill="#ce9178" opacity="0.25"/><rect x="19" y="42" width="1" height="1" fill="#ce9178" opacity="0.3"/><rect x="19" y="43" width="1" height="1" fill="#ce9178" opacity="0.4"/><rect x="20" y="42" width="1" height="1" fill="#ce9178" opacity="0.45"/><rect x="20" y="43" width="1" height="1" fill="#ce9178" opacity="0.25"/><rect x="21" y="42" width="1" height="1" fill="#d4d4d4" opacity="0.3"/><rect x="21" y="43" width="1" height="1" fill="#d4d4d4" opacity="0.4"/><rect x="8" y="44" width="1" height="1" fill="#9cdcfe" opacity="0.45"/><rect x="8" y="45" width="1" height="1" fill="#9cdcfe" opacity="0.25"/><rect x="9" y="44" width="1" height="1" fill="#9cdcfe" opacity="0.3"/><rect x="9" y="45" width="1" height="1" fill="#9cdcfe" opacity="0.4"/><rect x="10" y="44" width="1" height="1" fill="#9cdcfe" opacity="0.45"/><rect x="10" y="45" width="1" height="1" fill="#9cdcfe" opacity="0.25"/><rect x="11" y="44" width="1" height="1" fill="#9cdcfe" opacity="0.3"/><rect x="11" y="45" width="1" height="1" fill="#9cdcfe" opacity="0.4"/><rect x="12" y="44" width="1" height="1" fill="#9cdcfe" opacity="0.45"/><rect x="12" y="45" width="1" height="1" fill="#9cdcfe" opacity="0.25"/><rect x="13" y="44" width="1" height="1" fill="#9cdcfe" opacity="0.3"/><rect x="13" y="45" width="1" height="1" fill="#9cdcfe" opacity="0.4"/><rect x="14" y="44" width="1" height="1" fill="#9cdcfe" opacity="0.45"/><rect x="14" y="45" width="1" height="1" fill="#9cdcfe" opacity="0.25"/><rect x="15" y="44" width="1" height="1" fill="#9cdcfe" opacity="0.3"/><rect x="15" y="45" width="1" height="1" fill="#9cdcfe" opacity="0.4"/><rect x="16" y="44" width="1" height="1" fill="#9cdcfe" opacity="0.45"/><rect x="16" y="45" width="1" height="1" fill="#9cdcfe" opacity="0.25"/><rect x="17" y="44" width="1" height="1" fill="#9cdcfe" opacity="0.3"/><rect x="17" y="45" width="1" height="1" fill="#9cdcfe" opacity="0.4"/><rect x="18" y="44" width="1" height="1" fill="#9cdcfe" opacity="0.45"/><rect x="18" y="45" width="1" height="1" fill="#9cdcfe" opacity="0.25"/><rect x="19" y="44" width="1" height="1" fill="#9cdcfe" opacity="0.3"/><rect x="19" y="45" width="1" height="1" fill="#9cdcfe" opacity="0.4"/><rect x="20" y="44" width="1" height="1" fill="#9cdcfe" opacity="0.45"/><rect x="20" y="45" width="1" height="1" fill="#9cdcfe" opacity="0.25"/><rect x="21" y="44" width="1" height="1" fill="#9cdcfe" opacity="0.3"/><rect x="21" y="45" width="1" height="1" fill="#9cdcfe" opacity="0.4"/><rect x="22" y="44" width="1" height="1" fill="#d4d4d4" opacity="0.45"/><rect x="22" y="45" width="1" height="1" fill="#d4d4d4" opacity="0.25"/><rect x="24" y="44" width="1" height="1" fill="#ce9178" opacity="0.45"/><rect x="24" y="45" width="1" height="1" fill="#ce9178" opacity="0.25"/><rect x="25" y="44" width="1" height="1" fill="#ce9178" opacity="0.3"/><rect x="25" y="45" width="1" height="1" fill="#ce9178" opacity="0.4"/><rect x="26" y="44" width="1" height="1" fill="#ce9178" opacity="0.45"/><rect x="26" y="45" width="1" height="1" fill="#ce9178" opacity="0.25"/><rect x="28" y="44" width="1" height="1" fill="#ce9178" opacity="0.45"/><rect x="28" y="45" width="1" height="1" fill="#ce9178" opacity="0.25"/><rect x="29" y="44" width="1" height="1" fill="#ce9178" opacity="0.3"/><rect x="29" y="45" width="1" height="1" fill="#ce9178" opacity="0.4"/><rect x="30" y="44" width="1" height="1" fill="#ce9178" opacity="0.45"/><rect x="30" y="45" width="1" height="1" fill="#ce9178" opacity="0.25"/><rect x="31" y="44" width="1" height="1" fill="#ce9178" opacity="0.3"/><rect x="31" y="45" width="1" height="1" fill="#ce9178" opacity="0.4"/><rect x="32" y="44" width="1" height="1" fill="#ce9178" opacity="0.45"/><rect x="32" y="45" width="1" height="1" fill="#ce9178" opacity="0.25"/><rect x="33" y="44" width="1" height="1" fill="#d4d4d4" opacity="0.3"/><rect x="33" y="45" width="1" height="1" fill="#d4d4d4" opacity="0.4"/><rect x="4" y="46" width="1" height="1" fill="#d4d4d4" opacity="0.45"/><rect x="4" y="47" width="1" height="1" fill="#d4d4d4" opacity="0.25"/><rect x="0" y="48" width="1" height="1" fill="#d4d4d4" opacity="0.45"/><rect x="0" y="49" width="1" height="1" fill="#d4d4d4" opacity="0.25"/></g></svg>
<div class="orb"></div>
<div class="curmark"></div>
<div style="position:absolute;left:648px;top:0;width:12px;height:1px;background:#343434"></div><div style="position:absolute;left:648px;top:1px;width:12px;height:1px;background:#1a1a1a"></div>
</div>
<div class="div"></div>
<div class="rp">

<div class="hdr">Out Code</div>
<div class="tog"><div class="knob"><svg width="16" height="16" viewBox="0 0 24 24" fill="none" stroke="#d6d6dc" stroke-width="2.2" stroke-linecap="round" stroke-linejoin="round"><path d="M12 3a6 6 0 0 0 9 9 9 9 0 1 1-9-9Z"/></svg></div></div>
<div class="box"></div>
<div class="btn" style="top:64px;width:239px">Copy body Result Code</div>
<div class="lbl" style="top:119px">body Result Code:</div>
<div class="blk" style="top:154px;width:634px;height:62px"><div class="bl">w-full h-1/2 !m-0 bg-transparent transform translate-x-[10px]</div><div class="bl">-translate-y-[20px] scale-[.5]</div></div>
<div class="btn" style="top:233px;width:348px">Copy .my-hover:hover Result Code</div>
<div class="lbl" style="top:288px">.my-hover:hover Result Code:</div>
<div class="blk" style="top:323px;width:188px;height:34px"><div class="bl">hover:-bottom-1/3</div></div>
<div class="btn" style="top:374px;width:289px">Copy .my-style Result Code</div>
<div class="lbl" style="top:429px">.my-style Result Code:</div>
<div class="blk" style="top:464px;width:634px;height:62px"><div class="bl">mt-[8px] mx-[16px] mb-[12px] flex justify-between</div><div class="bl">backdrop-filter backdrop-blur-[5px] contrast-[1.2]</div></div>
<div class="btn" style="top:543px;width:556px">Copy @media(min-width:1536px)--&gt;.my-media Result Code</div>
<div class="lbl" style="top:598px">@media(min-width:1536px)--&gt;.my-media Result Code:</div>
<div class="blk" style="top:633px;width:634px;height:62px"><div class="bl">[@media(min-width:1536px)]:grid</div><div class="bl">[@media(min-width:1536px)]:grid-flow-row-dense</div></div>

</div>
</body></html>
